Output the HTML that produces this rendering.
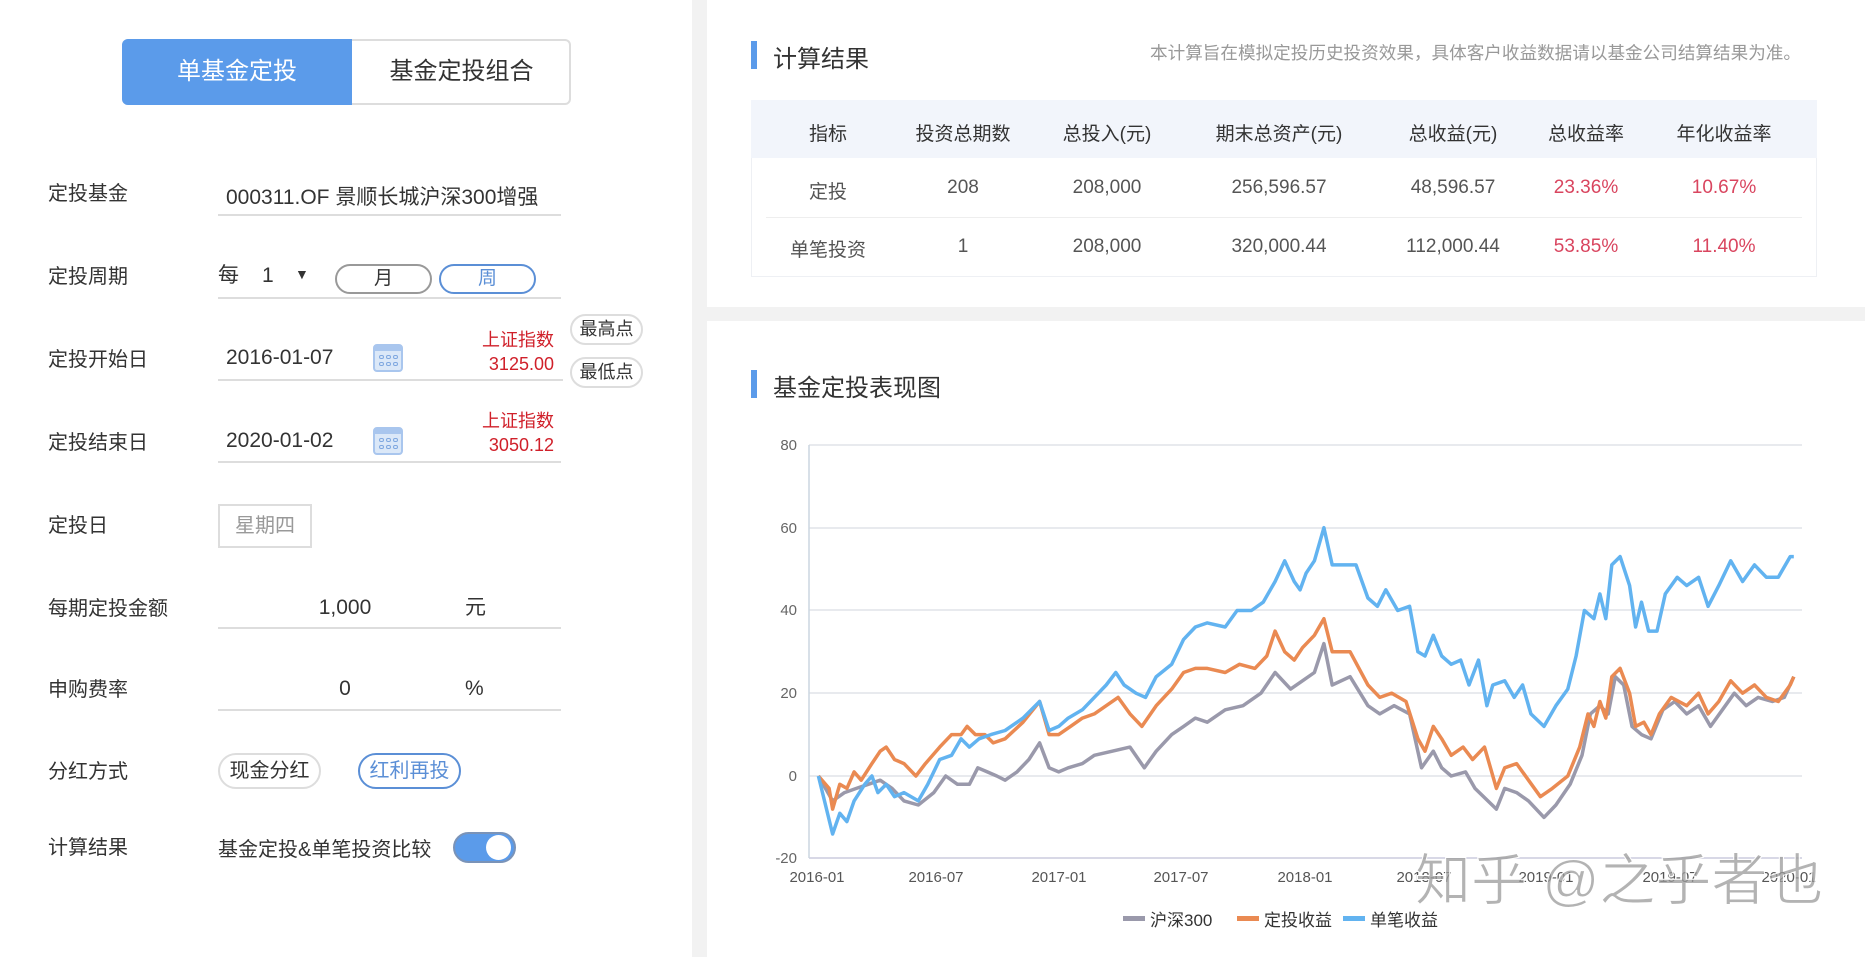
<!DOCTYPE html>
<html><head><meta charset="utf-8">
<style>
*{margin:0;padding:0;box-sizing:border-box}
html,body{width:1865px;height:957px;overflow:hidden;background:#f2f2f2;font-family:"Liberation Sans","Noto Sans CJK SC",sans-serif;color:#333}
.a{position:absolute}
.panel{position:absolute;background:#fff}
.lbl{position:absolute;left:48px;font-size:20px;color:#333;line-height:24px}
.ul{position:absolute;left:218px;width:343px;height:2px;background:#ddd}
.pill{position:absolute;border:2px solid #ccc;border-radius:18px;text-align:center;font-size:19px}
.th,.td{position:absolute;transform:translateX(-50%);white-space:nowrap;font-size:19px}
.td{color:#555}
.red{color:#d9455f}
.cal{position:absolute;width:30px;height:28px;border:2px solid #a9c6ee;border-radius:4px;background:#dbe8f8}
.cal:before{content:"";position:absolute;left:0;right:0;top:0;height:5px;background:#a9c6ee}
.cal i{position:absolute;width:5px;height:4px;border:1px solid #7fa8e0;border-radius:2px}
</style></head><body>
<div class="panel" style="left:0;top:0;width:692px;height:957px"></div>
<div class="panel" style="left:707px;top:0;width:1158px;height:307px"></div>
<div class="panel" style="left:707px;top:321px;width:1158px;height:636px"></div>

<div class="a" style="left:122px;top:39px;width:449px;height:66px;border:2px solid #ddd;border-radius:6px"></div>
<div class="a" style="left:122px;top:39px;width:230px;height:66px;background:#5b9bea;border-radius:6px 0 0 6px;color:#fff;font-size:24px;line-height:66px;text-align:center">单基金定投</div>
<div class="a" style="left:352px;top:39px;width:219px;height:66px;font-size:24px;line-height:66px;text-align:center;color:#333">基金定投组合</div>

<div class="lbl" style="top:182px">定投基金</div>
<div class="a" style="left:226px;top:181px;font-size:21px">000311.OF 景顺长城沪深300增强</div>
<div class="ul" style="top:214px"></div>

<div class="lbl" style="top:265px">定投周期</div>
<div class="a" style="left:218px;top:259px;font-size:21px">每</div>
<div class="a" style="left:262px;top:264px;font-size:21px">1</div>
<div class="a" style="left:295px;top:266px;font-size:14px">▼</div>
<div class="pill" style="left:335px;top:264px;width:97px;height:30px;line-height:26px;border-color:#999">月</div>
<div class="pill" style="left:439px;top:264px;width:97px;height:30px;line-height:26px;border-color:#5b8fd6;color:#5b8fd6">周</div>
<div class="ul" style="top:297px"></div>

<div class="lbl" style="top:348px">定投开始日</div>
<div class="a" style="left:226px;top:346px;font-size:21px">2016-01-07</div>
<div class="cal" style="left:373px;top:344px"><i style="left:4px;top:9px"></i><i style="left:11px;top:9px"></i><i style="left:18px;top:9px"></i><i style="left:4px;top:16px"></i><i style="left:11px;top:16px"></i><i style="left:18px;top:16px"></i></div>
<div class="a" style="left:440px;width:114px;text-align:right;top:328px;font-size:18px;line-height:24px;color:#d0202a">上证指数<br>3125.00</div>
<div class="pill" style="left:570px;top:314px;width:73px;height:31px;line-height:27px;font-size:18px;border-color:#ddd">最高点</div>
<div class="pill" style="left:570px;top:357px;width:73px;height:31px;line-height:27px;font-size:18px;border-color:#ddd">最低点</div>
<div class="ul" style="top:379px;width:345px"></div>

<div class="lbl" style="top:431px">定投结束日</div>
<div class="a" style="left:226px;top:429px;font-size:21px">2020-01-02</div>
<div class="cal" style="left:373px;top:427px"><i style="left:4px;top:9px"></i><i style="left:11px;top:9px"></i><i style="left:18px;top:9px"></i><i style="left:4px;top:16px"></i><i style="left:11px;top:16px"></i><i style="left:18px;top:16px"></i></div>
<div class="a" style="left:440px;width:114px;text-align:right;top:409px;font-size:18px;line-height:24px;color:#d0202a">上证指数<br>3050.12</div>
<div class="ul" style="top:461px"></div>

<div class="lbl" style="top:514px">定投日</div>
<div class="a" style="left:218px;top:504px;width:94px;height:44px;border:2px solid #ddd;color:#999;font-size:20px;line-height:40px;text-align:center">星期四</div>

<div class="lbl" style="top:597px">每期定投金额</div>
<div class="a" style="left:300px;width:90px;text-align:center;top:596px;font-size:21px">1,000</div>
<div class="a" style="left:465px;top:591px;font-size:21px">元</div>
<div class="ul" style="top:627px"></div>

<div class="lbl" style="top:678px">申购费率</div>
<div class="a" style="left:300px;width:90px;text-align:center;top:677px;font-size:21px">0</div>
<div class="a" style="left:465px;top:677px;font-size:21px">%</div>
<div class="ul" style="top:709px"></div>

<div class="lbl" style="top:760px">分红方式</div>
<div class="pill" style="left:218px;top:753px;width:103px;height:36px;line-height:32px;border-color:#ddd;font-size:20px">现金分红</div>
<div class="pill" style="left:358px;top:753px;width:103px;height:36px;line-height:32px;border-color:#5b8fd6;color:#5b8fd6;font-size:20px">红利再投</div>

<div class="lbl" style="top:836px">计算结果</div>
<div class="a" style="left:218px;top:833px;font-size:20px">基金定投&amp;单笔投资比较</div>
<div class="a" style="left:453px;top:832px;width:63px;height:31px;border-radius:16px;background:#5b9bea;border:2px solid #7a93b8"></div>
<div class="a" style="left:486px;top:835px;width:25px;height:25px;border-radius:50%;background:#fff"></div>

<div class="a" style="left:751px;top:41px;width:6px;height:28px;background:#5b9bea"></div>
<div class="a" style="left:773px;top:39px;font-size:24px">计算结果</div>
<div class="a" style="right:64px;top:40px;font-size:17.6px;color:#999">本计算旨在模拟定投历史投资效果，具体客户收益数据请以基金公司结算结果为准。</div>
<div class="a" style="left:751px;top:100px;width:1066px;height:177px;border:1px solid #eef0f4"></div>
<div class="a" style="left:751px;top:100px;width:1066px;height:58px;background:#f2f5fb"></div>
<div class="a" style="left:766px;top:217px;width:1036px;height:1px;background:#eee"></div>
<div class="th" style="left:828px;top:119px">指标</div>
<div class="th" style="left:963px;top:119px">投资总期数</div>
<div class="th" style="left:1107px;top:119px">总投入(元)</div>
<div class="th" style="left:1279px;top:119px">期末总资产(元)</div>
<div class="th" style="left:1453px;top:119px">总收益(元)</div>
<div class="th" style="left:1586px;top:119px">总收益率</div>
<div class="th" style="left:1724px;top:119px">年化收益率</div>
<div class="td" style="left:828px;top:177px">定投</div>
<div class="td" style="left:963px;top:177px">208</div>
<div class="td" style="left:1107px;top:177px">208,000</div>
<div class="td" style="left:1279px;top:177px">256,596.57</div>
<div class="td" style="left:1453px;top:177px">48,596.57</div>
<div class="td red" style="left:1586px;top:177px">23.36%</div>
<div class="td red" style="left:1724px;top:177px">10.67%</div>
<div class="td" style="left:828px;top:235px">单笔投资</div>
<div class="td" style="left:963px;top:236px">1</div>
<div class="td" style="left:1107px;top:236px">208,000</div>
<div class="td" style="left:1279px;top:236px">320,000.44</div>
<div class="td" style="left:1453px;top:236px">112,000.44</div>
<div class="td red" style="left:1586px;top:236px">53.85%</div>
<div class="td red" style="left:1724px;top:236px">11.40%</div>

<div class="a" style="left:751px;top:370px;width:6px;height:28px;background:#5b9bea"></div>
<div class="a" style="left:773px;top:368px;font-size:24px">基金定投表现图</div>

<svg class="a" style="left:0;top:0" width="1865" height="957" id="ch">
<g stroke="#e0e3e8" stroke-width="1.5">
<line x1="809" y1="445" x2="1802" y2="445"/>
<line x1="809" y1="528" x2="1802" y2="528"/>
<line x1="809" y1="610" x2="1802" y2="610"/>
<line x1="809" y1="693" x2="1802" y2="693"/>
<line x1="809" y1="776" x2="1802" y2="776"/>
<line x1="809" y1="858" x2="1802" y2="858" stroke="#ccd"/>
<line x1="809" y1="445" x2="809" y2="858" stroke="#ccd6e0"/>
</g>
<g font-size="15" fill="#666" text-anchor="end" font-family="Liberation Sans">
<text x="797" y="450">80</text><text x="797" y="533">60</text><text x="797" y="615">40</text>
<text x="797" y="698">20</text><text x="797" y="781">0</text><text x="797" y="863">-20</text>
</g>
<g font-size="15" fill="#555" text-anchor="middle" font-family="Liberation Sans">
<text x="817" y="882">2016-01</text><text x="936" y="882">2016-07</text><text x="1059" y="882">2017-01</text>
<text x="1181" y="882">2017-07</text><text x="1305" y="882">2018-01</text><text x="1424" y="882">2018-07</text>
<text x="1546" y="882">2019-01</text><text x="1670" y="882">2019-07</text><text x="1789" y="882">2020-01</text>
</g>
<path id="pg" fill="none" stroke="#9a99ab" stroke-width="3.5" stroke-linejoin="round"/>
<path id="po" fill="none" stroke="#ea8a52" stroke-width="3.5" stroke-linejoin="round"/>
<path id="pb" fill="none" stroke="#62b3f0" stroke-width="3.5" stroke-linejoin="round"/>
<g font-size="17" fill="#333" font-family="Liberation Sans,Noto Sans CJK SC">
<rect x="1123" y="916" width="22" height="5" fill="#9a99ab"/><text x="1150" y="926">沪深300</text>
<rect x="1237" y="916" width="22" height="5" fill="#ea8a52"/><text x="1264" y="926">定投收益</text>
<rect x="1343" y="916" width="22" height="5" fill="#62b3f0"/><text x="1370" y="926">单笔收益</text>
</g>
<text x="1415" y="900" font-size="56" fill="#999" fill-opacity="0.75" stroke="#fff" stroke-width="1" font-family="Liberation Sans,Noto Sans CJK SC">知乎 @之乎者也</text>
</svg>
<script>
var s=1.1895;
function P(a){var d="";for(var i=0;i<a.length;i+=2){var x=a[i]*s,y=(374+(80-a[i+1])*3.48)*s;d+=(i?"L":"M")+x.toFixed(1)+" "+y.toFixed(1);}return d;}
var B=[688,0,700,-14,706,-9,712,-11,718,-6,727,-2,733,0,738,-4,745,-2,752,-5,760,-4,772,-6,780,-2,790,4,800,5,808,9,815,7,823,9,833,10,845,11,860,14,874,18,882,11,890,12,898,14,910,16,920,19,930,22,938,25,945,22,955,20,963,19,972,24,985,27,995,33,1005,36,1015,37,1030,36,1040,40,1052,40,1062,42,1072,47,1080,52,1088,47,1093,45,1098,49,1105,52,1113,60,1120,51,1130,51,1140,51,1150,43,1158,41,1165,45,1175,40,1185,41,1192,30,1198,29,1205,34,1212,29,1220,27,1228,28,1235,22,1243,28,1250,17,1255,22,1265,23,1273,19,1280,22,1287,15,1298,12,1308,17,1318,21,1325,29,1332,40,1340,38,1345,44,1350,38,1355,51,1362,53,1370,46,1375,36,1380,42,1386,35,1393,35,1400,44,1410,48,1418,46,1428,48,1436,41,1445,46,1455,52,1465,47,1475,51,1485,48,1495,48,1505,53,1508,53];
var O=[688,0,697,-3,700,-8,706,-2,712,-3,718,1,724,-1,733,3,740,6,745,7,752,4,760,3,770,0,778,3,790,7,800,10,808,10,813,12,820,10,828,10,835,8,845,9,860,13,874,18,882,10,890,10,900,12,910,14,920,15,930,17,940,19,950,15,960,12,972,17,985,21,995,25,1005,26,1015,26,1030,25,1042,27,1055,26,1065,29,1072,35,1080,30,1088,28,1095,31,1105,34,1113,38,1120,30,1135,30,1150,22,1160,19,1170,20,1182,18,1192,9,1198,6,1205,12,1212,9,1220,5,1230,7,1238,4,1248,7,1258,-3,1265,2,1275,3,1285,-1,1295,-5,1305,-3,1318,0,1328,7,1335,15,1340,12,1345,18,1350,14,1355,24,1362,26,1370,20,1375,12,1382,13,1388,10,1395,15,1405,19,1418,17,1428,20,1436,15,1445,18,1455,23,1465,20,1475,22,1485,19,1495,18,1505,22,1508,24];
var G=[688,0,700,-6,710,-4,720,-3,730,-2,740,-1,750,-3,760,-6,772,-7,785,-4,795,0,805,-2,815,-2,822,2,830,1,838,0,845,-1,855,1,865,4,874,8,882,2,890,1,898,2,910,3,920,5,935,6,950,7,962,2,972,6,985,10,995,12,1005,14,1015,13,1030,16,1045,17,1060,20,1072,25,1085,21,1095,23,1105,25,1113,32,1120,22,1135,24,1150,17,1160,15,1172,17,1185,15,1195,2,1205,6,1212,2,1220,0,1232,1,1240,-3,1258,-8,1265,-3,1275,-4,1285,-6,1298,-10,1308,-7,1320,-2,1330,5,1337,15,1345,17,1352,15,1358,24,1365,22,1372,12,1380,10,1388,9,1398,16,1408,18,1418,15,1428,17,1438,12,1448,16,1458,20,1468,17,1478,19,1490,18,1500,19,1508,24];
document.getElementById("pg").setAttribute("d",P(G));
document.getElementById("po").setAttribute("d",P(O));
document.getElementById("pb").setAttribute("d",P(B));
</script>
</body></html>
